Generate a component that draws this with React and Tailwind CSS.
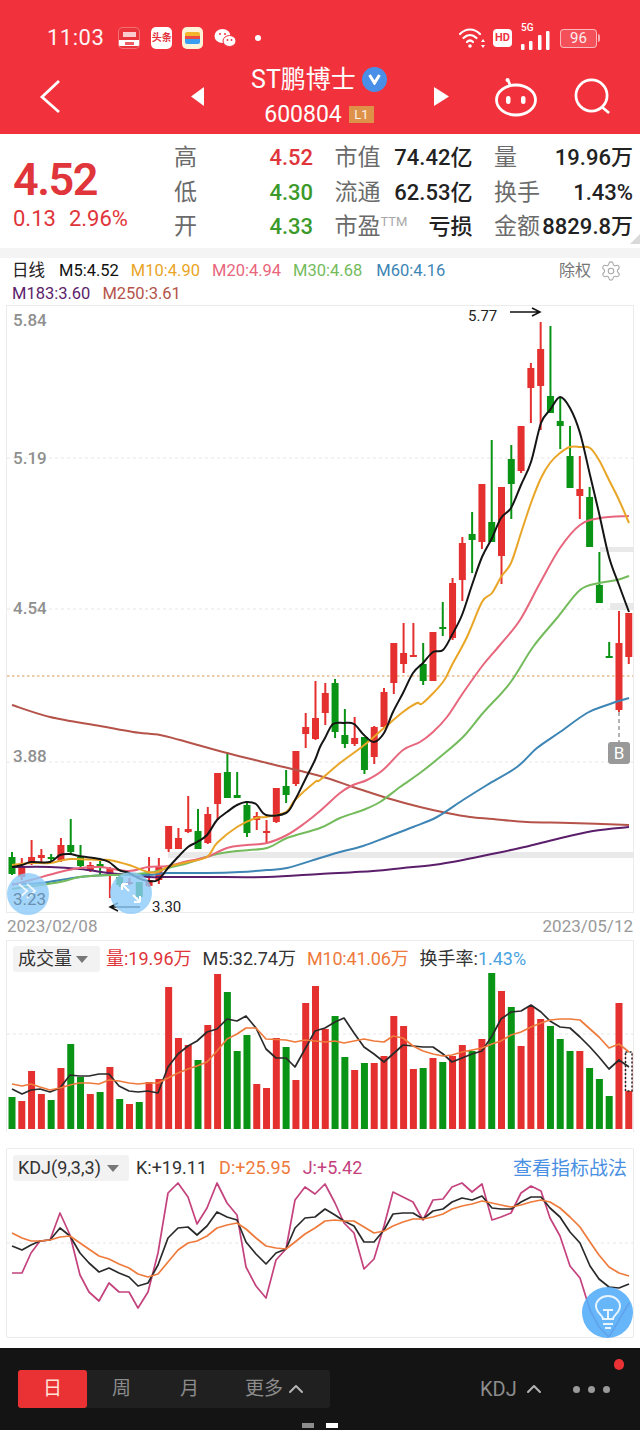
import { Settings, ChevronUp } from 'lucide-react';

const RED = '#e4312f';
const GREEN = '#0a9416';

// [high, bodyTop, bodyBottom, low, isRed]
const candles = [
  [852, 857, 874, 875, 0], [858, 867, 877, 880, 1], [840, 857, 864, 865, 1], [849, 855, 858, 863, 1],
  [854, 857, 859, 862, 0], [838, 845, 861, 862, 1], [819, 845, 852, 854, 0], [845, 857, 866, 867, 0],
  [862, 865, 870, 872, 1], [860, 864, 868, 875, 0], [867, 868, 874, 898, 1], [875, 877, 885, 887, 0],
  [878, 882, 884, 885, 1], [882, 882, 897, 900, 0], [857, 880, 886, 887, 1], [858, 867, 880, 884, 1],
  [826, 826, 849, 852, 1], [828, 838, 849, 849, 1], [796, 829, 832, 833, 1], [809, 831, 849, 849, 0],
  [807, 814, 843, 844, 1], [773, 773, 804, 820, 1], [752, 772, 798, 798, 0], [772, 795, 798, 798, 0],
  [803, 805, 833, 837, 0], [812, 816, 820, 830, 1], [820, 831, 833, 843, 1], [788, 788, 822, 823, 1],
  [770, 786, 795, 803, 0], [751, 751, 784, 786, 1], [713, 727, 734, 748, 1], [681, 718, 739, 740, 1],
  [683, 693, 713, 725, 1], [679, 683, 732, 738, 0], [709, 735, 744, 748, 0], [717, 738, 744, 746, 1],
  [737, 737, 770, 774, 0], [726, 727, 757, 764, 1], [688, 692, 727, 728, 1], [643, 643, 683, 694, 1],
  [623, 653, 664, 673, 1], [623, 655, 657, 657, 1], [643, 664, 681, 685, 0], [632, 632, 681, 681, 1],
  [602, 627, 629, 636, 0], [578, 583, 638, 640, 1], [537, 543, 580, 601, 1], [512, 534, 540, 573, 0],
  [484, 484, 542, 549, 1], [440, 522, 542, 542, 0], [487, 487, 556, 584, 1], [445, 459, 484, 519, 0],
  [426, 426, 471, 473, 1], [363, 368, 388, 423, 1], [322, 349, 386, 430, 1], [326, 396, 413, 413, 0],
  [398, 421, 426, 449, 0], [426, 456, 488, 488, 0], [456, 489, 496, 519, 1], [487, 497, 547, 547, 0],
  [552, 585, 603, 603, 0], [642, 656, 658, 658, 0], [611, 643, 710, 712, 1], [613, 613, 657, 664, 1],
];

const m5 = '12,867 22,865 31,862 50,862 60,855 70,854 79,856 100,859 109,862 119,870 129,873 138,878 148,881 158,880 168,868 178,857 188,847 197,842 207,835 217,820 227,812 237,805 246,802 256,804 266,815 286,813 295,800 305,780 315,760 320,747 325,738 333,724 344,723 354,724 364,735 374,742 384,733 393,712 403,693 413,673 423,663 433,652 443,650 452,635 462,615 472,585 482,557 492,538 501,518 511,508 521,485 531,462 541,423 550,410 560,397 570,408 580,433 590,475 599,513 609,557 619,585 629,612';
const m10 = '12,865 31,863 50,863 70,859 100,860 109,860 129,865 148,872 158,872 168,867 188,862 207,857 217,843 237,827 256,818 266,817 286,812 295,800 315,782 320,780 340,763 363,746 384,728 403,712 417,703 423,703 443,682 452,665 467,637 482,602 492,593 501,577 511,563 521,533 531,503 541,478 550,463 560,453 570,447 580,447 590,448 599,460 609,480 619,500 629,523';
const m20 = '12,885 31,880 60,872 80,868 100,867 129,871 148,867 168,866 188,861 207,857 227,848 247,845 267,843 287,835 305,823 320,811 340,793 353,785 367,780 383,770 403,750 420,742 433,732 447,717 463,693 483,665 500,645 520,620 540,583 560,548 580,525 600,518 629,516';
const m30 = '12,889 60,882 80,877 110,875 148,873 168,868 188,863 203,858 217,854 237,851 267,848 287,838 320,828 340,818 363,810 380,802 400,787 420,773 440,757 463,737 483,713 510,683 533,647 557,618 580,590 599,583 617,580 629,576';
const m60 = '12,884 40,883 80,877 110,875 148,875 168,873 207,873 240,872 267,870 287,868 320,858 340,852 363,846 387,837 413,827 437,817 463,800 487,785 517,767 537,748 560,732 587,713 607,705 629,698';
const m183 = '12,867 50,867 80,869 109,873 129,875 148,877 168,877 207,877 267,877 320,874 373,871 403,868 433,865 463,860 487,855 520,848 553,840 593,831 629,827';
const m250 = '12,705 50,717 100,726 133,732 160,735 180,740 227,753 267,763 320,776 353,787 387,798 420,807 447,813 470,817 493,819 527,822 570,823 629,825';

const maLines = [
  [m250, '#b5534a'], [m183, '#5b1e6b'], [m60, '#3d85b5'], [m30, '#74bb5c'], [m20, '#e8667c'], [m10, '#e9a526'], [m5, '#151515'],
];

// top of each volume bar, baseline 1130
const volTops = [
  1098, 1102, 1072, 1095, 1101, 1069, 1045, 1078, 1095, 1093, 1068, 1100, 1105, 1103, 1083, 1080,
  988, 1039, 1046, 1061, 1026, 975, 993, 1052, 1036, 1085, 1089, 1039, 1048, 1081, 1004, 987,
  1030, 1017, 1058, 1071, 1064, 1064, 1057, 1017, 1027, 1070, 1069, 1059, 1063, 1057, 1046, 1052,
  1040, 974, 992, 1008, 1047, 1008, 1020, 1027, 1040, 1052, 1052, 1069, 1080, 1097, 1004, 1053,
];

const volBlack = '12,1090 22,1095 31,1091 40,1090 50,1093 60,1089 70,1076 79,1077 89,1077 99,1075 109,1075 119,1087 129,1092 138,1093 148,1092 158,1094 168,1068 178,1055 188,1047 197,1042 207,1033 217,1030 227,1020 237,1022 246,1017 256,1029 266,1050 276,1059 286,1059 295,1068 305,1050 315,1032 325,1029 335,1023 344,1019 354,1034 364,1048 374,1055 384,1063 393,1055 403,1046 413,1047 423,1048 433,1048 443,1055 452,1063 462,1059 472,1055 482,1052 492,1037 501,1020 511,1013 521,1012 531,1006 541,1013 550,1022 560,1028 570,1029 580,1038 590,1048 599,1058 609,1070 619,1061 629,1068';
const volOrange = '12,1085 22,1087 31,1085 40,1088 50,1091 60,1089 70,1086 79,1084 89,1084 99,1085 109,1081 119,1082 129,1084 138,1085 148,1084 158,1084 168,1079 178,1074 188,1070 197,1067 207,1063 217,1052 227,1040 237,1035 246,1029 256,1029 266,1040 286,1041 295,1043 305,1041 315,1042 325,1043 335,1042 344,1044 354,1042 364,1040 374,1042 384,1043 393,1037 403,1039 413,1047 423,1052 433,1055 443,1057 452,1056 462,1053 472,1051 482,1049 492,1045 501,1042 511,1036 521,1033 531,1028 541,1024 550,1021 560,1020 570,1020 580,1021 590,1030 599,1038 609,1049 619,1045 629,1053';

const kdjK = '12,1246 22,1250 31,1245 40,1241 50,1240 60,1228 70,1236 80,1253 89,1263 99,1272 109,1268 119,1273 129,1277 138,1286 148,1283 158,1265 168,1238 178,1228 188,1227 197,1235 207,1226 217,1212 227,1217 237,1220 246,1242 256,1254 266,1264 276,1253 286,1249 295,1228 305,1218 315,1217 325,1209 335,1215 344,1221 354,1226 364,1242 374,1242 384,1230 393,1214 403,1213 413,1213 423,1219 433,1211 443,1209 452,1202 462,1198 472,1200 482,1196 492,1208 501,1209 511,1209 521,1202 531,1197 541,1197 550,1208 560,1217 570,1232 580,1243 590,1266 599,1279 609,1287 619,1288 629,1284';
const kdjD = '12,1233 22,1238 31,1241 40,1241 50,1240 60,1237 70,1236 80,1243 99,1256 109,1259 119,1264 129,1268 138,1274 148,1277 158,1274 168,1262 178,1250 188,1243 197,1241 207,1236 217,1228 227,1225 237,1223 246,1229 256,1238 266,1246 276,1248 286,1249 295,1242 305,1234 315,1228 325,1221 335,1220 344,1221 354,1221 364,1227 374,1233 384,1231 393,1226 403,1222 413,1219 423,1219 433,1217 443,1214 452,1209 462,1206 472,1204 482,1201 492,1203 501,1205 511,1207 521,1205 531,1202 541,1200 550,1202 560,1208 570,1217 580,1227 590,1242 599,1255 609,1267 619,1273 629,1276';
const kdjJ = '12,1273 22,1273 31,1253 40,1241 50,1240 60,1213 70,1235 80,1275 89,1292 99,1301 109,1283 119,1292 129,1292 138,1308 148,1292 158,1253 168,1193 178,1183 188,1197 197,1224 207,1208 217,1183 227,1203 237,1215 246,1267 256,1286 266,1298 276,1260 286,1249 295,1200 305,1187 315,1194 325,1184 335,1203 344,1223 354,1233 364,1269 374,1259 384,1226 393,1192 403,1197 413,1202 423,1220 433,1200 443,1199 452,1187 462,1183 472,1192 482,1184 492,1220 501,1217 511,1213 521,1193 531,1186 541,1191 550,1218 560,1236 570,1266 580,1278 590,1310 599,1327 609,1337 619,1320 629,1303';

// catmull-rom through the sampled points, the moving averages are smooth curves
function smooth(str) {
  const p = str.split(' ').map((s) => s.split(',').map(Number));
  let d = `M${p[0][0]} ${p[0][1]}`;
  for (let i = 0; i < p.length - 1; i++) {
    const a = p[Math.max(i - 1, 0)];
    const b = p[i];
    const c = p[i + 1];
    const e = p[Math.min(i + 2, p.length - 1)];
    const c1x = b[0] + (c[0] - a[0]) / 6;
    const c1y = b[1] + (c[1] - a[1]) / 6;
    const c2x = c[0] - (e[0] - b[0]) / 6;
    const c2y = c[1] - (e[1] - b[1]) / 6;
    d += `C${c1x} ${c1y} ${c2x} ${c2y} ${c[0]} ${c[1]}`;
  }
  return d;
}

function Candles() {
  return candles.map(([high, top, bottom, low, up], i) => {
    const x = 12 + i * 9.79;
    const color = up ? RED : GREEN;
    return (
      <g key={i} fill={color}>
        <rect x={x - 1} y={high} width="2" height={low - high} />
        <rect x={x - 3.5} y={top} width="7" height={Math.max(bottom - top, 2)} />
      </g>
    );
  });
}

function WifiIcon() {
  return (
    <svg width="26" height="24" viewBox="0 0 26 24" fill="none" stroke="#fff" strokeWidth="2.200" strokeLinecap="round">
      <path d="M1 8c6-6 14-6 20 0" />
      <path d="M4.500 12c4-4 9-4 13 0" />
      <path d="M8 16c2-2 4-2 6 0" />
      <circle cx="11" cy="20" r="1.800" fill="#fff" stroke="none" />
      <path d="M24 13l-2 3h4zM24 22l-2-3h4z" fill="#fff" stroke="none" />
    </svg>
  );
}

function SignalBars() {
  return (
    <svg width="29" height="19" viewBox="0 0 29 19" fill="#fff">
      <rect x="0" y="13" width="3.500" height="6" rx="1" />
      <rect x="8" y="10" width="3.500" height="9" rx="1" />
      <rect x="17" y="4" width="3.500" height="15" rx="1" />
      <rect x="25" y="0" width="3.500" height="19" rx="1" />
    </svg>
  );
}

function AppIcons() {
  return (
    <div className="flex items-center ml-[14px]">
      <div className="w-[22px] h-[22px] rounded-[5px] bg-[#e9343c] border border-white/30 overflow-hidden flex flex-col items-center pt-[4px]">
        <div className="w-[13px] h-[5px] bg-white/75" />
        <div className="w-full h-[6px] mt-[3px] bg-white flex justify-center items-center">
          <div className="w-[9px] h-[3px] bg-[#e9343c]/80" />
        </div>
      </div>
      <div className="w-[21px] h-[22px] ml-[11px] rounded-[5px] bg-white flex items-center justify-center text-[#e3323b] text-[10px] font-bold leading-none">头条</div>
      <div className="w-[21px] h-[22px] ml-[10px] rounded-[5px] bg-[#fdf3d8] flex flex-col justify-center items-center">
        <div className="w-[15px] h-[4px] bg-[#f4b52e] rounded-t-[2px]" />
        <div className="w-[15px] h-[3px] bg-[#ef4a3f]" />
        <div className="w-[15px] h-[5px] bg-[#3b9df0] rounded-b-[2px]" />
      </div>
      <svg className="ml-[11px]" width="22" height="20" viewBox="0 0 22 20" fill="#fff">
        <ellipse cx="8.500" cy="8" rx="8" ry="7" />
        <ellipse cx="15.500" cy="13" rx="6.500" ry="5.500" stroke="#f1323c" />
        <circle cx="6" cy="6" r="1" fill="#f1323c" />
        <circle cx="11" cy="6" r="1" fill="#f1323c" />
        <circle cx="13.500" cy="12" r="0.900" fill="#f1323c" />
        <circle cx="17.500" cy="12" r="0.900" fill="#f1323c" />
      </svg>
      <div className="w-[6px] h-[6px] rounded-full bg-white ml-[19px]" />
    </div>
  );
}

function StatusBar() {
  return (
    <div className="mt-[26px] h-[24px] flex items-center pl-[47px] pr-[40px] text-white">
      <span className="text-[22px] leading-none tracking-[0.5px] opacity-95">11:03</span>
      <AppIcons />
      <div className="ml-auto flex items-center">
        <WifiIcon />
        <div className="ml-[8px] w-[19px] h-[18px] rounded-[4px] bg-white text-[#f1323c] text-[11px] font-bold leading-[18px] text-center">HD</div>
        <div className="ml-[9px] relative w-[29px] h-[24px] flex items-end justify-end">
          <span className="absolute left-0 top-[-3px] text-[10px] leading-none font-medium">5G</span>
          <SignalBars />
        </div>
        <div className="ml-[10px] flex items-center">
          <div className="w-[37px] h-[19px] rounded-[4px] border border-white/60 bg-white/15 text-[15px] leading-[17px] text-center text-white/90">96</div>
          <div className="w-[2px] h-[8px] bg-white/60 rounded-r-[2px] ml-[1px]" />
        </div>
      </div>
    </div>
  );
}

function NavBar() {
  return (
    <div className="mt-[15px] h-[63px] flex items-center text-white">
      <svg className="ml-[38px]" width="24" height="36" viewBox="0 0 24 36" fill="none" stroke="#fff" strokeWidth="2.800">
        <path d="M21 2L4 18l17 15" />
      </svg>
      <svg className="ml-[129px]" width="13" height="19" viewBox="0 0 13 19" fill="#fff"><path d="M13 0v19L0 9.500z" /></svg>
      <div className="w-[230px] flex flex-col items-center">
        <div className="h-[32px] flex items-center">
          <span className="text-[25px] leading-none">ST鹏博士</span>
          <span className="ml-[6px] w-[25px] h-[25px] rounded-full bg-[#4a8fe7] flex items-center justify-center">
            <svg width="13" height="11" viewBox="0 0 13 11" fill="none" stroke="#fff" strokeWidth="3"><path d="M1.500 1l5 8 5-8" /></svg>
          </span>
        </div>
        <div className="h-[31px] flex items-center mt-[4px]">
          <span className="text-[23px] leading-none">600804</span>
          <span className="ml-[7px] w-[25px] h-[17px] bg-[#dd9149] text-[13px] leading-[17px] text-center text-white/90">L1</span>
        </div>
      </div>
      <svg width="15" height="19" viewBox="0 0 15 19" fill="#fff"><path d="M0 0v19l15-9.500z" /></svg>
      <svg className="ml-[45px]" width="44" height="40" viewBox="0 0 44 40" fill="none" stroke="#fff" strokeWidth="2.800">
        <ellipse cx="22" cy="23" rx="19.500" ry="15" />
        <path d="M16 8l-2-5" />
        <circle cx="13.500" cy="3" r="2" fill="#fff" stroke="none" />
        <rect x="12" y="19" width="4.500" height="8" rx="2.200" fill="#fff" stroke="none" />
        <rect x="27" y="19" width="4.500" height="8" rx="2.200" fill="#fff" stroke="none" />
      </svg>
      <svg className="ml-[36px]" width="37" height="37" viewBox="0 0 38 38" fill="none" stroke="#fff" strokeWidth="2.800">
        <circle cx="18" cy="18" r="16" />
        <path d="M29 30l7 6" />
      </svg>
    </div>
  );
}

const labelCls = 'text-[23px] leading-[34px] text-[#6b6b6b]';
const valueCls = 'text-[22px] leading-[34px] font-medium';

const quoteRows = [
  { a: '高', av: '4.52', ac: 'text-[#e0353a]', b: '市值', bv: '74.42亿', c: '量', cv: '19.96万' },
  { a: '低', av: '4.30', ac: 'text-[#3b9a2a]', b: '流通', bv: '62.53亿', c: '换手', cv: '1.43%' },
  { a: '开', av: '4.33', ac: 'text-[#3b9a2a]', b: '市盈', ttm: true, bv: '亏损', c: '金额', cv: '8829.8万' },
];

function QuotePanel() {
  return (
    <div className="relative h-[114px] flex bg-white">
      <div className="w-[174px] pl-[13px] pt-[21px]">
        <div className="text-[45px] leading-[50px] font-semibold text-[#e0353a] tracking-[-1.500px]">4.52</div>
        <div className="text-[22px] leading-[28px] text-[#e0353a] flex gap-[13px]">
          <span>0.13</span>
          <span>2.96%</span>
        </div>
      </div>
      <div className="pt-[7px]">
        {quoteRows.map((r) => (
          <div key={r.a} className="grid grid-cols-[139px_138px_139px] gap-x-[21.500px] h-[34.500px]">
            <div className="flex justify-between">
              <span className={labelCls}>{r.a}</span>
              <span className={`${valueCls} ${r.ac}`}>{r.av}</span>
            </div>
            <div className="flex justify-between">
              <span className={`${labelCls} flex`}>
                {r.b}
                {r.ttm && <span className="text-[13px] leading-[24px] text-[#a8a8a8]">TTM</span>}
              </span>
              <span className={`${valueCls} text-[#222222]`}>{r.bv}</span>
            </div>
            <div className="flex justify-between">
              <span className={labelCls}>{r.c}</span>
              <span className={`${valueCls} text-[#222222]`}>{r.cv}</span>
            </div>
          </div>
        ))}
      </div>
      <div className="absolute right-0 bottom-[4px] w-[10px] h-[10px] bg-[#d9d9d9] [clip-path:polygon(100%_0,100%_100%,0_100%)]" />
    </div>
  );
}

function Legend() {
  return (
    <div className="relative h-[47px] pl-[12px] pt-[1px] text-[16.500px] leading-[23px]">
      <div className="flex">
        <span className="text-[#222222]">日线</span>
        <span className="ml-[14px] text-[#111111]">M5:4.52</span>
        <span className="ml-[12px] text-[#e9a526]">M10:4.90</span>
        <span className="ml-[12px] text-[#e8667c]">M20:4.94</span>
        <span className="ml-[12px] text-[#74bb5c]">M30:4.68</span>
        <span className="ml-[14px] text-[#3d85b5]">M60:4.16</span>
      </div>
      <div className="flex">
        <span className="text-[#5b1e6b]">M183:3.60</span>
        <span className="ml-[12px] text-[#b5534a]">M250:3.61</span>
      </div>
      <div className="absolute right-[18px] top-[1px] flex items-center text-[#777777] text-[16px]">
        <span>除权</span>
        <Settings className="ml-[9px]" size={22} strokeWidth={1.200} color="#a8a8a8" />
      </div>
    </div>
  );
}

function KlineChart() {
  return (
    <div className="relative mx-[6px] h-[608px] border border-[#ececec]">
      <svg className="block overflow-visible" width="626" height="606" viewBox="7 306 626 606" fill="none">
        <rect x="168" y="852" width="466" height="6" fill="#e9e9e9" />
        <rect x="600" y="547" width="34" height="5" fill="#e9e9e9" />
        <rect x="610" y="603" width="24" height="7" fill="#e9e9e9" />
        {[458, 609, 762].map((y) => (
          <line key={y} x1="7" x2="633" y1={y} y2={y} stroke="#e6e6e6" strokeDasharray="3 3" />
        ))}
        <line x1="7" x2="633" y1="676" y2="676" stroke="#d99a4e" strokeDasharray="2.500 2.500" />
        <Candles />
        {maLines.map(([pts, color]) => (
          <path key={color} d={smooth(pts)} stroke={color} strokeWidth="2" strokeLinejoin="round" />
        ))}
        <g fill="#8f8f8f" fontSize="17" fontWeight="500">
          <text x="13" y="326">5.84</text>
          <text x="13" y="464">5.19</text>
          <text x="13" y="614">4.54</text>
          <text x="13" y="762">3.88</text>
        </g>
        <g fill="#222222" fontSize="15">
          <text x="468" y="321">5.77</text>
          <text x="152" y="912">3.30</text>
        </g>
        <path d="M510 312h30M532 308l8 4-8 4" stroke="#111111" strokeWidth="1.500" />
        <path d="M140 907h-30M118 903l-8 4 8 4" stroke="#111111" strokeWidth="1.500" />
        <line x1="619" x2="619" y1="712" y2="742" stroke="#999999" strokeWidth="1.500" strokeDasharray="4 3" />
      </svg>

      <div className="absolute left-[601px] top-[436px] w-[22px] h-[22px] rounded-[3px] bg-[#999999] text-white text-[17px] leading-[22px] text-center">B</div>

      {/* floating buttons over the chart */}
      <div className="absolute left-[0px] top-[567px] w-[42px] h-[42px] rounded-full bg-[#8ccbf9]/80 flex items-center justify-center">
        <svg className="mb-[6px]" width="22" height="20" viewBox="0 0 22 20" fill="none" stroke="#fff" strokeWidth="2" opacity="0.8">
          <path d="M2 3l8 7-8 7M10 3l8 7-8 7" />
        </svg>
        <span className="absolute left-[6px] top-[16px] text-[17px] leading-[20px] text-[#6a8fb0]">3.23</span>
      </div>
      <div className="absolute left-[103px] top-[566px] w-[42px] h-[42px] rounded-full bg-[#8ccbf9]/80 flex items-center justify-center">
        <svg width="24" height="24" viewBox="0 0 24 24" fill="none" stroke="#fff" strokeWidth="2">
          <path d="M3 3l7 7M3 3h6M3 3v6M21 21l-7-7M21 21h-6M21 21v-6" />
        </svg>
      </div>
    </div>
  );
}

function VolumePanel() {
  return (
    <div className="mx-[6px] h-[192px] border border-[#ececec] border-b-0">
      <div className="mt-[5px] ml-[6px] h-[26px] flex items-center text-[18px] leading-none whitespace-nowrap">
        <div className="w-[87px] h-[26px] rounded-[3px] bg-[#f2f2f2] flex items-center pl-[5px] text-[#333333]">
          成交量
          <span className="ml-[4px] w-0 h-0 border-x-[6px] border-x-transparent border-t-[7px] border-t-[#777777]" />
        </div>
        <span className="ml-[6px] text-[#e0353a]">量:19.96万</span>
        <span className="ml-[11px] text-[#333333]">M5:32.74万</span>
        <span className="ml-[11px] tracking-[-0.200px] text-[#ee7a3c]">M10:41.06万</span>
        <span className="ml-[11px] text-[#333333]">换手率:</span>
        <span className="text-[#4aa3e0]">1.43%</span>
      </div>
      <svg className="block" width="626" height="159" viewBox="7 973 626 159" fill="none">
        <line x1="7" x2="633" y1="1035" y2="1035" stroke="#e6e6e6" strokeDasharray="3 3" />
        {volTops.map((top, i) => {
          const up = candles[i][4];
          return <rect key={i} x={12 + i * 9.79 - 3.500} y={top} width="7" height={1130 - top} fill={up ? RED : GREEN} />;
        })}
        <rect x="625.500" y="1053" width="6.500" height="39" fill="#fff" stroke="#222222" strokeWidth="1.500" strokeDasharray="2 2" />
        <polyline points={volBlack} stroke="#2a2a2a" strokeWidth="1.700" strokeLinejoin="round" />
        <polyline points={volOrange} stroke="#ee7a3c" strokeWidth="1.700" strokeLinejoin="round" />
      </svg>
    </div>
  );
}

function KdjPanel() {
  return (
    <div className="relative mx-[6px] mt-[16px] h-[190px] border border-[#ececec] rounded-[2px]">
      <div className="mt-[6px] ml-[6px] h-[26px] flex items-center text-[18px] leading-none whitespace-nowrap">
        <div className="w-[116px] h-[26px] rounded-[3px] bg-[#f2f2f2] flex items-center pl-[5px] text-[#333333]">
          KDJ(9,3,3)
          <span className="ml-[6px] w-0 h-0 border-x-[6px] border-x-transparent border-t-[7px] border-t-[#777777]" />
        </div>
        <span className="ml-[7px] text-[#333333]">K:+19.11</span>
        <span className="ml-[12px] text-[#ee7a3c]">D:+25.95</span>
        <span className="ml-[12px] text-[#c4427d]">J:+5.42</span>
        <span className="ml-auto mr-[6px] text-[19px] text-[#4a90e2]">查看指标战法</span>
      </div>
      <svg className="block" width="626" height="156" viewBox="7 1181 626 156" fill="none">
        <line x1="7" x2="633" y1="1243" y2="1243" stroke="#e6e6e6" strokeDasharray="3 3" />
        <polyline points={kdjJ} stroke="#c4427d" strokeWidth="1.700" strokeLinejoin="round" />
        <polyline points={kdjK} stroke="#2a2a2a" strokeWidth="1.700" strokeLinejoin="round" />
        <polyline points={kdjD} stroke="#ee7a3c" strokeWidth="1.700" strokeLinejoin="round" />
      </svg>
      <div className="absolute left-[575px] top-[138px] w-[51px] h-[51px] rounded-full bg-[#55aef8]/90 flex items-center justify-center">
        <svg width="28" height="36" viewBox="0 0 28 36" fill="none" stroke="#fff" strokeOpacity="0.85" strokeWidth="2">
          <path d="M9 24c0-4-7-6-7-13a12 10 0 0 1 24 0c0 7-7 9-7 13z" />
          <path d="M9 15h10M14 15v9M9 29h10M11 33h6" />
        </svg>
      </div>
    </div>
  );
}

function BottomBar() {
  return (
    <div className="mt-auto h-[82px] bg-[#141414] relative pt-[22px]">
      <div className="flex items-center">
        <div className="ml-[18px] w-[312px] h-[38px] rounded-[3px] bg-[#202020] flex items-center text-[19px] text-[#8c8c8c]">
          <div className="w-[69px] h-[38px] rounded-[3px] bg-[#ea3235] text-[#ffe3d6] flex items-center justify-center">日</div>
          <span className="ml-[25px]">周</span>
          <span className="ml-[49px]">月</span>
          <span className="ml-[46px]">更多</span>
          <ChevronUp className="ml-[1px]" size={24} strokeWidth={2} color="#b5b5b5" />
        </div>
        <div className="ml-[150px] flex items-center text-[20px] text-[#8c8c8c]">
          KDJ
          <ChevronUp className="ml-[5px]" size={24} strokeWidth={2} color="#b5b5b5" />
        </div>
        <div className="ml-[27px] flex gap-[8px]">
          <span className="w-[7px] h-[7px] rounded-full bg-[#9a9a9a]" />
          <span className="w-[7px] h-[7px] rounded-full bg-[#9a9a9a]" />
          <span className="w-[7px] h-[7px] rounded-full bg-[#9a9a9a]" />
        </div>
      </div>
      <div className="mt-[15px] flex justify-center gap-[12px]">
        <span className="w-[12px] h-[5px] bg-[#8c8c8c]" />
        <span className="w-[12px] h-[5px] bg-white" />
      </div>
      <span className="absolute left-[614px] top-[11px] w-[10px] h-[11px] rounded-full bg-[#ea3235]" />
    </div>
  );
}

export default function App() {
  return (
    <div className="w-[640px] h-[1430px] overflow-hidden bg-white flex flex-col font-['Roboto','Noto_Sans_CJK_SC',sans-serif]">
      <div className="h-[134px] shrink-0 bg-[#f1323c]">
        <StatusBar />
        <NavBar />
      </div>
      <QuotePanel />
      <div className="h-[10px] bg-[#f4f4f4]" />
      <Legend />
      <KlineChart />
      <div className="h-[27px] mx-[7px] flex justify-between items-center text-[17px] text-[#999999]">
        <span>2023/02/08</span>
        <span>2023/05/12</span>
      </div>
      <VolumePanel />
      <KdjPanel />
      <BottomBar />
    </div>
  );
}
